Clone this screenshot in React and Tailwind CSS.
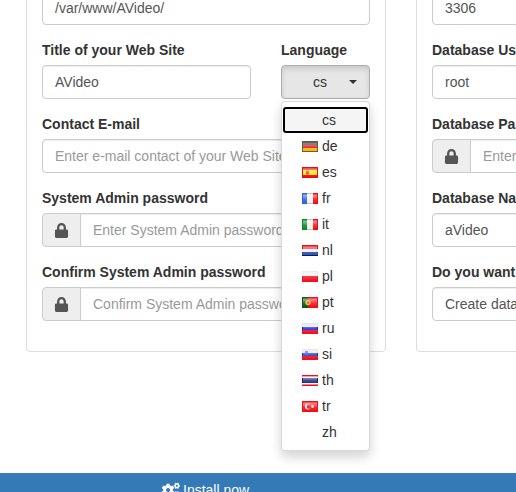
import React from "react";
import { FaLock, FaCogs } from "react-icons/fa";

const inputClass =
  "block w-full h-[34px] px-3 border border-[#ccc] rounded bg-white text-sm text-[#555] placeholder:text-[#999] shadow-[inset_0_1px_1px_rgba(0,0,0,0.075)] outline-none";

const Field = ({ label, children, className = "" }) => (
  <div className={`mb-[15px] ${className}`}>
    <label className="block mb-[5px] text-sm leading-5 font-bold text-[#333] whitespace-nowrap">{label}</label>
    {children}
  </div>
);

const PasswordInput = ({ placeholder }) => (
  <div className="flex h-[34px]">
    <span className="flex items-center justify-center w-[39px] shrink-0 bg-[#eee] border border-[#ccc] rounded-l text-[#555] text-[15px]">
      <FaLock />
    </span>
    <input
      type="password"
      placeholder={placeholder}
      className="min-w-0 flex-1 h-[34px] px-3 -ml-px border border-[#ccc] rounded-r bg-white text-sm text-[#555] placeholder:text-[#999] shadow-[inset_0_1px_1px_rgba(0,0,0,0.075)] outline-none"
    />
  </div>
);

// small glossy flags, same look for all of them
const Flag = ({ children }) => (
  <svg width="16" height="11" viewBox="0 0 16 11" className="mr-1 shrink-0">
    <defs>
      <linearGradient id="gloss" x1="0" y1="0" x2="0" y2="1">
        <stop offset="0" stopColor="#fff" stopOpacity="0.2" />
        <stop offset="0.2" stopColor="#fff" stopOpacity="0.5" />
        <stop offset="0.55" stopColor="#fff" stopOpacity="0.15" />
        <stop offset="1" stopColor="#fff" stopOpacity="0" />
      </linearGradient>
    </defs>
    {children}
    <rect x="1" y="1" width="14" height="9" fill="url(#gloss)" />
  </svg>
);

const flags = {
  de: (
    <>
      <rect width="16" height="11" fill="#6b5a3a" />
      <rect x="1" y="1" width="14" height="3" fill="#222" />
      <rect x="1" y="4" width="14" height="3" fill="#e8101a" />
      <rect x="1" y="7" width="14" height="3" fill="#f5b800" />
    </>
  ),
  es: (
    <>
      <rect width="16" height="11" fill="#f00c0c" />
      <rect x="1" y="3" width="14" height="5" fill="#ffe600" />
      <rect x="4" y="3.5" width="3" height="4" fill="#d84a20" />
    </>
  ),
  fr: (
    <>
      <rect width="16" height="11" fill="#c0c4cc" />
      <rect width="5" height="11" fill="#2f62d8" />
      <rect x="5" y="1" width="6" height="9" fill="#eee" />
      <rect x="11" width="5" height="11" fill="#ee1018" />
    </>
  ),
  it: (
    <>
      <rect width="16" height="11" fill="#c0c4c0" />
      <rect width="5" height="11" fill="#078a2a" />
      <rect x="5" y="1" width="6" height="9" fill="#eee" />
      <rect x="11" width="5" height="11" fill="#ee1018" />
    </>
  ),
  nl: (
    <>
      <rect width="16" height="4" fill="#ee1018" />
      <rect y="4" width="16" height="3" fill="#f0f0f0" />
      <rect y="7" width="16" height="3" fill="#2a55a8" />
      <rect y="10" width="16" height="1" fill="#0a1a70" />
    </>
  ),
  pl: (
    <>
      <rect width="16" height="5" fill="#ececec" />
      <rect y="5" width="16" height="6" fill="#f01020" />
    </>
  ),
  pt: (
    <>
      <rect width="16" height="11" fill="#ee1018" />
      <rect width="6" height="11" fill="#0a5a18" />
      <circle cx="6" cy="5.5" r="2.6" fill="#f5c518" />
      <circle cx="6" cy="5.5" r="1.3" fill="#e03820" />
    </>
  ),
  ru: (
    <>
      <rect width="16" height="4" fill="#e4e4f0" />
      <rect y="4" width="16" height="3" fill="#1020f0" />
      <rect y="7" width="16" height="4" fill="#f01020" />
    </>
  ),
  si: (
    <>
      <rect width="16" height="4" fill="#e8e8e8" />
      <rect y="4" width="16" height="3" fill="#1838d0" />
      <rect y="7" width="16" height="4" fill="#f01020" />
      <rect x="3" y="2" width="3" height="4" fill="#2848d8" />
    </>
  ),
  th: (
    <>
      <rect width="16" height="11" fill="#f4f4f4" />
      <rect width="16" height="1.5" fill="#ee1018" />
      <rect y="9.5" width="16" height="1.5" fill="#ee1018" />
      <rect y="3" width="16" height="5" fill="#1a2478" />
    </>
  ),
  tr: (
    <>
      <rect width="16" height="11" fill="#f01018" />
      <circle cx="6" cy="5.5" r="3" fill="#fff" />
      <circle cx="7" cy="5.5" r="2.4" fill="#f01018" />
      <circle cx="10.5" cy="5.5" r="1.3" fill="#fff" />
    </>
  ),
};

const languages = ["cs", "de", "es", "fr", "it", "nl", "pl", "pt", "ru", "si", "th", "tr", "zh"];

const LanguageSelect = () => (
  <div className="relative w-[89px]">
    <button className="flex items-center w-full h-[34px] border border-[#adadad] rounded bg-[#e6e6e6] text-sm text-[#333] shadow-[inset_0_3px_5px_rgba(0,0,0,0.125)]">
      <span className="ml-[31px]">cs</span>
      <span className="ml-[22px] w-0 h-0 border-x-4 border-x-transparent border-t-4 border-t-[#333]" />
    </button>
    <ul className="absolute left-0 top-9 z-10 w-[89px] py-[5px] bg-white border border-black/15 rounded shadow-[0_6px_12px_rgba(0,0,0,0.175)]">
      {languages.map((lang) => (
        <li
          key={lang}
          className={`flex items-center h-[26px] text-sm text-[#333] ${
            lang === "cs" ? "mx-px pl-[39px] bg-[#f5f5f5] outline-2 -outline-offset-2 outline-black rounded-[3px]" : "pl-5"
          }`}
        >
          {flags[lang] && <Flag>{flags[lang]}</Flag>}
          {lang === "zh" && <span className="w-5 shrink-0" />}
          {lang}
        </li>
      ))}
    </ul>
  </div>
);

const App = () => {
  return (
    <div className="h-[492px] w-[516px] overflow-hidden bg-white font-['Liberation_Sans',Arial,sans-serif] text-sm text-[#333]">
      <div className="flex gap-[30px] pl-[26px] -mt-[31px]">
        {/* Left column */}
        <div className="w-[360px] shrink-0 h-[383px] pt-[21px] px-[15px] border border-[#ddd] rounded bg-white">
          <input className={`${inputClass} mb-[15px]`} defaultValue="/var/www/AVideo/" />
          <div className="flex justify-between">
            <Field label="Title of your Web Site" className="w-[209px]">
              <input className={inputClass} defaultValue="AVideo" />
            </Field>
            <Field label="Language" className="w-[89px]">
              <LanguageSelect />
            </Field>
          </div>
          <Field label="Contact E-mail">
            <input className={inputClass} placeholder="Enter e-mail contact of your Web Site" />
          </Field>
          <Field label="System Admin password">
            <PasswordInput placeholder="Enter System Admin password" />
          </Field>
          <Field label="Confirm System Admin password">
            <PasswordInput placeholder="Confirm System Admin password" />
          </Field>
        </div>

        {/* Right column */}
        <div className="w-[360px] shrink-0 h-[383px] pt-[21px] px-[15px] border border-[#ddd] rounded bg-white">
          <input className={`${inputClass} mb-[15px]`} defaultValue="3306" />
          <Field label="Database User">
            <input className={inputClass} defaultValue="root" />
          </Field>
          <Field label="Database Password">
            <PasswordInput placeholder="Enter Database Password" />
          </Field>
          <Field label="Database Name">
            <input className={inputClass} defaultValue="aVideo" />
          </Field>
          <Field label="Do you want to create database and tables?">
            <div className={`${inputClass} flex items-center`}>Create database and tables</div>
          </Field>
        </div>
      </div>

      <div className="mt-[121px] h-[34px] flex items-center pl-[162px] bg-[#337ab7] text-white text-sm">
        <FaCogs className="mr-[3px] text-[18px]" />
        Install now
      </div>
    </div>
  );
};

export default App;
